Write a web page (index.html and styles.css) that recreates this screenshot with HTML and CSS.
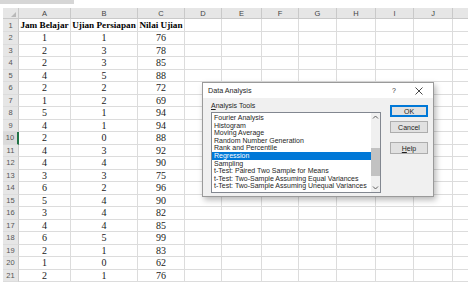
FILE: index.html
```html
<!DOCTYPE html>
<html lang="id">
<head>
    <meta charset="UTF-8">
    <title>Data Analysis</title>
    <link rel="stylesheet" href="styles.css">
</head>
<body>
    <div class="tab-strip"></div>

    <div class="sheet">
        <div class="row head">
            <div class="corner"><span class="tri"></span></div>
            <div>A</div><div>B</div><div>C</div><div>D</div><div>E</div><div>F</div><div>G</div><div>H</div><div>I</div><div>J</div><div class="edge"></div>
        </div>
        <div class="row titles">
            <div class="num">1</div><div>Jam Belajar</div><div>Ujian Persiapan</div><div>Nilai Ujian</div>
            <div></div><div></div><div></div><div></div><div></div><div></div><div></div><div class="edge"></div>
        </div>
        <div class="row"><div class="num">2</div><div>1</div><div>1</div><div>76</div><div></div><div></div><div></div><div></div><div></div><div></div><div></div><div class="edge"></div></div>
        <div class="row"><div class="num">3</div><div>2</div><div>3</div><div>78</div><div></div><div></div><div></div><div></div><div></div><div></div><div></div><div class="edge"></div></div>
        <div class="row"><div class="num">4</div><div>2</div><div>3</div><div>85</div><div></div><div></div><div></div><div></div><div></div><div></div><div></div><div class="edge"></div></div>
        <div class="row"><div class="num">5</div><div>4</div><div>5</div><div>88</div><div></div><div></div><div></div><div></div><div></div><div></div><div></div><div class="edge"></div></div>
        <div class="row"><div class="num">6</div><div>2</div><div>2</div><div>72</div><div></div><div></div><div></div><div></div><div></div><div></div><div></div><div class="edge"></div></div>
        <div class="row"><div class="num">7</div><div>1</div><div>2</div><div>69</div><div></div><div></div><div></div><div></div><div></div><div></div><div></div><div class="edge"></div></div>
        <div class="row"><div class="num">8</div><div>5</div><div>1</div><div>94</div><div></div><div></div><div></div><div></div><div></div><div></div><div></div><div class="edge"></div></div>
        <div class="row"><div class="num">9</div><div>4</div><div>1</div><div>94</div><div></div><div></div><div></div><div></div><div></div><div></div><div></div><div class="edge"></div></div>
        <div class="row"><div class="num active">10</div><div>2</div><div>0</div><div>88</div><div></div><div></div><div></div><div></div><div></div><div></div><div></div><div class="edge"></div></div>
        <div class="row"><div class="num">11</div><div>4</div><div>3</div><div>92</div><div></div><div></div><div></div><div></div><div></div><div></div><div></div><div class="edge"></div></div>
        <div class="row"><div class="num">12</div><div>4</div><div>4</div><div>90</div><div></div><div></div><div></div><div></div><div></div><div></div><div></div><div class="edge"></div></div>
        <div class="row"><div class="num">13</div><div>3</div><div>3</div><div>75</div><div></div><div></div><div></div><div></div><div></div><div></div><div></div><div class="edge"></div></div>
        <div class="row"><div class="num">14</div><div>6</div><div>2</div><div>96</div><div></div><div></div><div></div><div></div><div></div><div></div><div></div><div class="edge"></div></div>
        <div class="row"><div class="num">15</div><div>5</div><div>4</div><div>90</div><div></div><div></div><div></div><div></div><div></div><div></div><div></div><div class="edge"></div></div>
        <div class="row"><div class="num">16</div><div>3</div><div>4</div><div>82</div><div></div><div></div><div></div><div></div><div></div><div></div><div></div><div class="edge"></div></div>
        <div class="row"><div class="num">17</div><div>4</div><div>4</div><div>85</div><div></div><div></div><div></div><div></div><div></div><div></div><div></div><div class="edge"></div></div>
        <div class="row"><div class="num">18</div><div>6</div><div>5</div><div>99</div><div></div><div></div><div></div><div></div><div></div><div></div><div></div><div class="edge"></div></div>
        <div class="row"><div class="num">19</div><div>2</div><div>1</div><div>83</div><div></div><div></div><div></div><div></div><div></div><div></div><div></div><div class="edge"></div></div>
        <div class="row"><div class="num">20</div><div>1</div><div>0</div><div>62</div><div></div><div></div><div></div><div></div><div></div><div></div><div></div><div class="edge"></div></div>
        <div class="row"><div class="num">21</div><div>2</div><div>1</div><div>76</div><div></div><div></div><div></div><div></div><div></div><div></div><div></div><div class="edge"></div></div>
    </div>

    <!-- dialog floats above the sheet -->
    <div class="dialog">
        <div class="dialog-title">
            <span>Data Analysis</span>
            <span class="title-btns">
                <span class="q">?</span>
                <svg width="8" height="8" viewBox="0 0 8 8"><path d="M0.5 0.5 L7.5 7.5 M7.5 0.5 L0.5 7.5" stroke="#333" stroke-width="0.9" fill="none"/></svg>
            </span>
        </div>
        <div class="dialog-body">
            <div class="tools">
                <div class="tools-label"><u>A</u>nalysis Tools</div>
                <div class="listbox">
                    <ul class="items">
                        <li>Fourier Analysis</li>
                        <li>Histogram</li>
                        <li>Moving Average</li>
                        <li>Random Number Generation</li>
                        <li>Rank and Percentile</li>
                        <li class="selected">Regression</li>
                        <li>Sampling</li>
                        <li>t-Test: Paired Two Sample for Means</li>
                        <li>t-Test: Two-Sample Assuming Equal Variances</li>
                        <li>t-Test: Two-Sample Assuming Unequal Variances</li>
                    </ul>
                    <div class="scrollbar">
                        <svg class="arrow" width="9" height="9" viewBox="0 0 9 9"><path d="M2 5.5 L4.5 3 L7 5.5" stroke="#606060" stroke-width="1" fill="none"/></svg>
                        <div class="thumb"></div>
                        <svg class="arrow down" width="9" height="9" viewBox="0 0 9 9"><path d="M2 3.5 L4.5 6 L7 3.5" stroke="#606060" stroke-width="1" fill="none"/></svg>
                    </div>
                </div>
            </div>
            <div class="buttons">
                <button class="btn default">OK</button>
                <button class="btn">Cancel</button>
                <button class="btn help"><u>H</u>elp</button>
            </div>
        </div>
    </div>
</body>
</html>
```

FILE: styles.css
```css
body {
    margin: 0;
    background-color: #fff;
    font-family: 'Liberation Sans', Arial, sans-serif;
    width: 474px;
    height: 295px;
    overflow: hidden;
    position: relative;
}

.tab-strip {
    width: 74px;
    height: 4px;
    background-color: #d6d6d6;
}

.sheet {
    margin: 4px 0 0 3px;
    width: 465px;
}

.row {
    display: grid;
    grid-template-columns: 16px 52px 67px 47px 37px 40px 37px 38px 39px 38px 39px 15px;
    height: 12.5px;
}

.row > div {
    box-sizing: border-box;
    border-right: 1px solid #dcdcdc;
    border-bottom: 1px solid #dcdcdc;
    display: flex;
    align-items: center;
    justify-content: center;
    font-family: 'Liberation Serif', 'Times New Roman', serif;
    font-size: 10px;
    color: #1a1a1a;
    white-space: nowrap;
}

.row > .edge {
    border-right: none;
}

.row.head {
    height: 11px;
}

.row.head > div {
    background-color: #e6e6e6;
    border-right-color: #c9c9c9;
    border-bottom-color: #c9c9c9;
    font-family: 'Liberation Sans', Arial, sans-serif;
    font-size: 7.5px;
    color: #444;
}

.row.titles {
    height: 13px;
}

.row.titles > div {
    font-weight: bold;
    font-size: 9.2px;
    color: #000;
}

.row > .num {
    background-color: #e6e6e6;
    border-right-color: #c9c9c9;
    font-family: 'Liberation Sans', Arial, sans-serif;
    font-size: 7.5px;
    font-weight: normal;
    color: #555;
}

.row.titles > .num {
    font-weight: normal;
    font-size: 7.5px;
    color: #555;
}

.row > .num.active {
    background-color: #dadada;
    border-right: 2px solid #217346;
}

.corner {
    position: relative;
}

.tri {
    position: absolute;
    right: 2px;
    bottom: 1px;
    width: 0;
    height: 0;
    border-left: 5px solid transparent;
    border-bottom: 5px solid #b9b9b9;
}

/* Data Analysis dialog */
.dialog {
    position: absolute;
    left: 202px;
    top: 82px;
    width: 232px;
    height: 115px;
    box-sizing: border-box;
    border: 1px solid #9a9a9a;
    background-color: #f0f0f0;
    box-shadow: 2px 3px 6px rgba(0, 0, 0, 0.28);
    font-size: 7px;
    color: #1e1e1e;
}

.dialog-title {
    height: 15px;
    background-color: #fff;
    display: flex;
    align-items: center;
    justify-content: space-between;
    padding: 0 10px 0 5px;
    font-size: 7.2px;
}

.title-btns {
    display: flex;
    align-items: center;
    gap: 19px;
}

.q {
    font-size: 7px;
    color: #333;
}

.dialog-body {
    display: flex;
    padding: 4px 5px 0 8px;
    gap: 9px;
}

.tools-label {
    height: 10px;
    line-height: 8px;
}

.listbox {
    width: 170px;
    height: 81px;
    box-sizing: border-box;
    border: 1px solid #828790;
    background-color: #fff;
    display: flex;
}

.items {
    list-style: none;
    margin: 0;
    padding: 1px 0 0 0;
    flex: 1;
    overflow: hidden;
}

.items li {
    height: 7.6px;
    line-height: 7.6px;
    padding-left: 2px;
    white-space: nowrap;
}

.items li.selected {
    background-color: #0078d7;
    color: #fff;
}

.scrollbar {
    width: 9px;
    background-color: #f0f0f0;
    display: flex;
    flex-direction: column;
}

.arrow {
    display: block;
}

.arrow.down {
    margin-top: auto;
}

.thumb {
    margin-top: 26px;
    height: 28px;
    background-color: #c2c2c2;
}

.buttons {
    display: flex;
    flex-direction: column;
    margin-top: 3px;
    gap: 4px;
}

.btn {
    width: 38px;
    height: 12px;
    padding: 0;
    box-sizing: border-box;
    border: 1px solid #adadad;
    background-color: #e1e1e1;
    font-family: 'Liberation Sans', Arial, sans-serif;
    font-size: 7px;
    color: #1e1e1e;
}

.btn.default {
    border: 1px solid #0078d7;
    box-shadow: inset 0 0 0 1px #0078d7;
}

.btn.help {
    margin-top: 5px;
}
```
